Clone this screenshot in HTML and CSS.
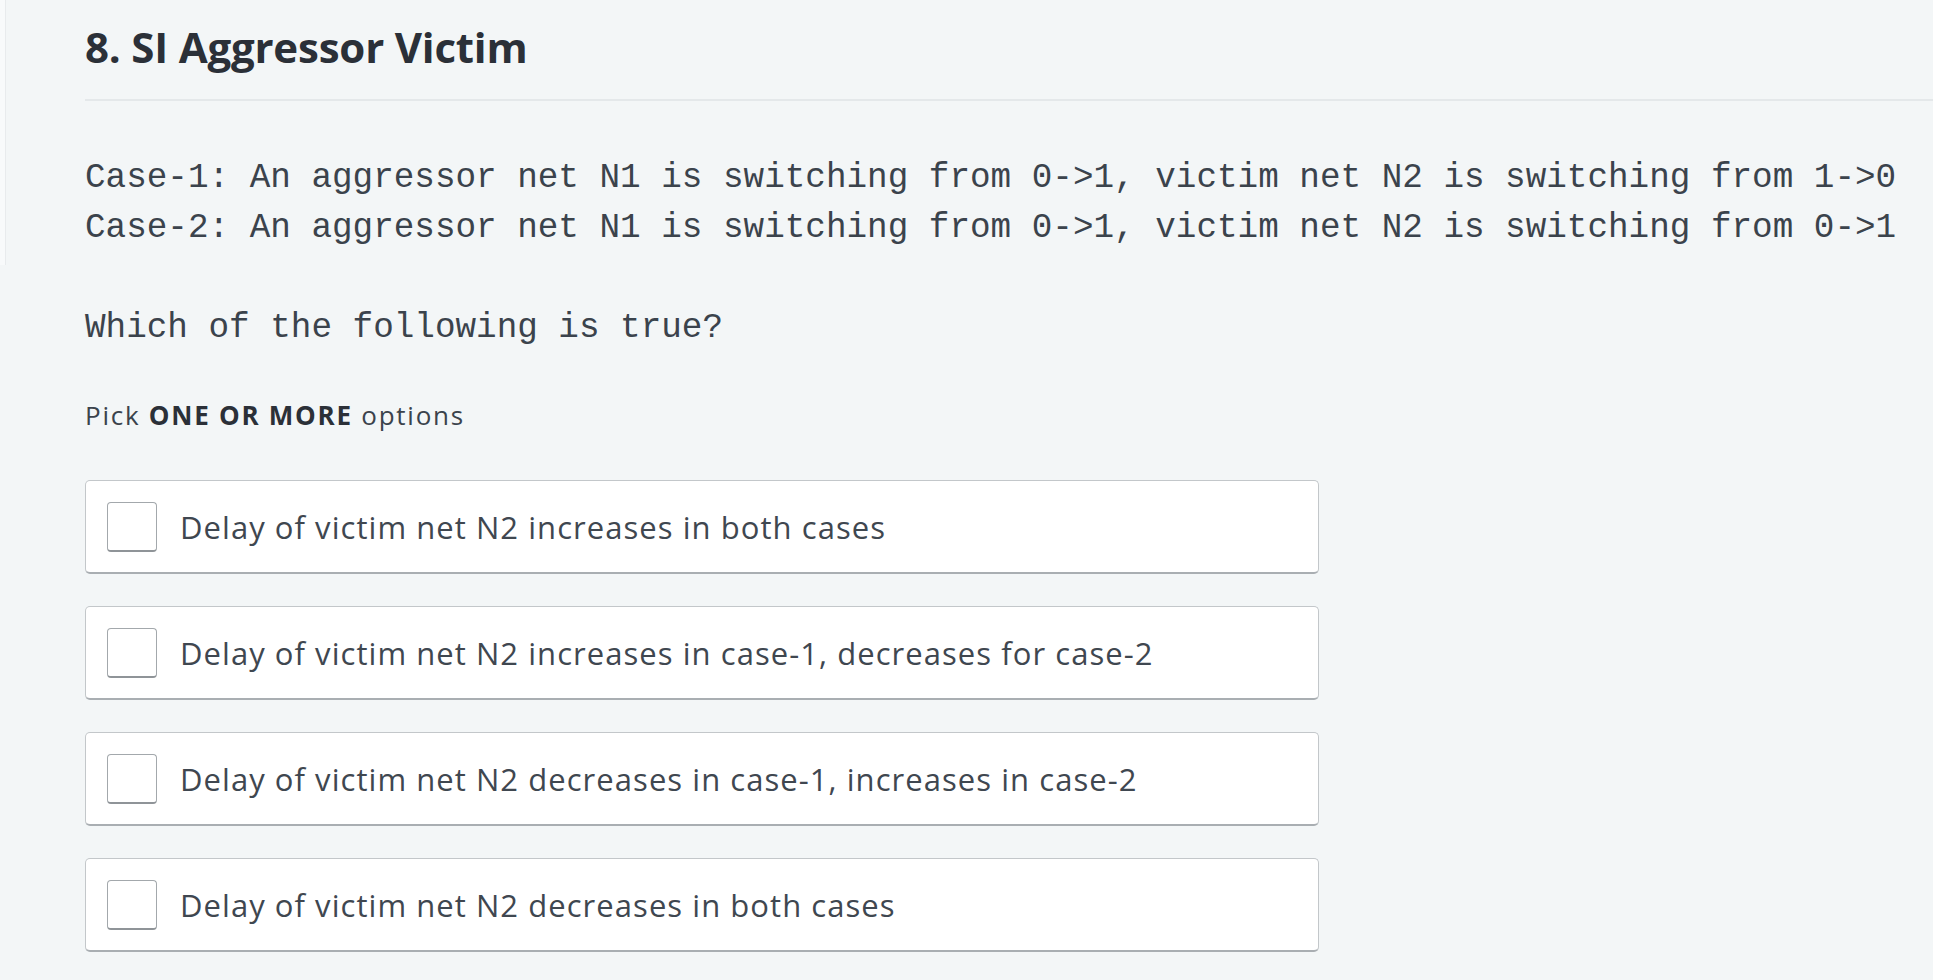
FILE: index.html
```html
<!DOCTYPE html>
<html lang="en">
<head>
<meta charset="utf-8">
<title>SI Aggressor Victim</title>
<link rel="stylesheet" href="styles.css">
</head>
<body>
<div class="edge"></div>
<main class="question">
  <header class="q-head">
    <h1 class="q-title">8. SI Aggressor Victim</h1>
  </header>
  <pre class="q-body">Case-1: An aggressor net N1 is switching from 0-&gt;1, victim net N2 is switching from 1-&gt;0
Case-2: An aggressor net N1 is switching from 0-&gt;1, victim net N2 is switching from 0-&gt;1

Which of the following is true?</pre>
  <p class="q-hint">Pick <strong>ONE OR MORE</strong> options</p>
  <ul class="options">
    <li class="option"><span class="check"></span><span class="opt-text">Delay of victim net N2 increases in both cases</span></li>
    <li class="option"><span class="check"></span><span class="opt-text">Delay of victim net N2 increases in case-1, decreases for case-2</span></li>
    <li class="option"><span class="check"></span><span class="opt-text">Delay of victim net N2 decreases in case-1, increases in case-2</span></li>
    <li class="option"><span class="check"></span><span class="opt-text">Delay of victim net N2 decreases in both cases</span></li>
  </ul>
</main>
</body>
</html>
```
FILE: styles.css
```css
html, body {
  margin: 0;
  padding: 0;
}
body {
  background: #f3f6f7;
  font-family: "Open Sans", "Liberation Sans", sans-serif;
  color: #39424e;
  width: 1933px;
  height: 980px;
  overflow: hidden;
  position: relative;
}
.edge {
  position: absolute;
  left: 0;
  top: 0;
  width: 5px;
  height: 265px;
  background: #f8fafb;
  border-right: 1px solid #e8ebed;
}
.question {
  padding: 19px 0 0 85px;
}
.q-head {
  border-bottom: 2px solid #e4e8ea;
  padding-bottom: 24px;
}
.q-title {
  margin: 0;
  font-size: 42px;
  line-height: 56px;
  font-weight: 700;
  color: #2b3038;
  letter-spacing: -0.2px;
}
.q-body {
  margin: 52px 0 0 0;
  font-family: "Liberation Mono", "DejaVu Sans Mono", monospace;
  font-size: 34.3px;
  line-height: 50px;
  color: #3b434c;
  white-space: pre;
}
.q-hint {
  margin: 45px 0 0 0;
  font-size: 26px;
  line-height: 34px;
  letter-spacing: 1.75px;
  color: #3b434c;
}
.q-hint strong {
  font-weight: 700;
  color: #2b3038;
}
.options {
  list-style: none;
  margin: 48px 0 0 0;
  padding: 0;
  display: flex;
  flex-direction: column;
  gap: 32px;
  width: 1234px;
}
.option {
  height: 94px;
  box-sizing: border-box;
  background: #ffffff;
  border: 1px solid #c3c7ca;
  border-bottom: 2px solid #a9aeb2;
  border-radius: 5px;
  display: flex;
  align-items: center;
  padding-left: 21px;
  gap: 23px;
}
.check {
  width: 50px;
  height: 50px;
  box-sizing: border-box;
  border: 1px solid #a3a8ac;
  border-bottom: 2px solid #8f9498;
  border-radius: 4px;
  background: #ffffff;
  flex: none;
}
.opt-text {
  font-size: 31px;
  line-height: 40px;
  letter-spacing: 1.05px;
  color: #3f4750;
}
```
